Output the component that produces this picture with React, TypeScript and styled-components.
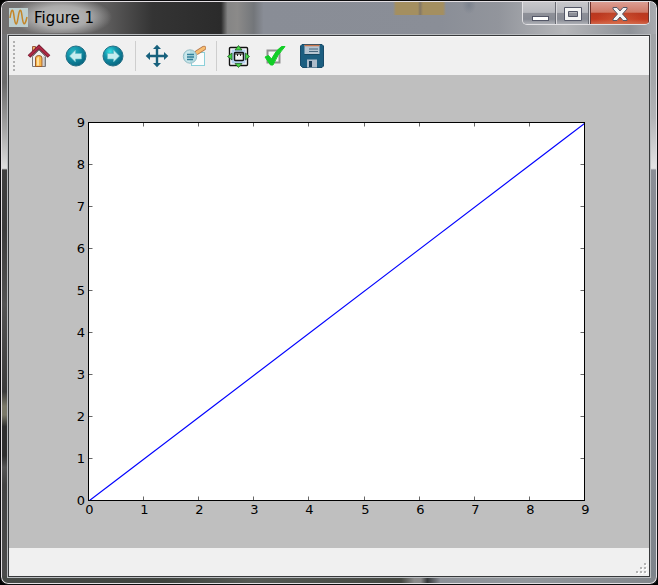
import React from "react";
import styled, { createGlobalStyle, css } from "styled-components";

const GlobalStyle = createGlobalStyle`
  * { box-sizing: border-box; }
  body { margin: 0; background: #000; font-family: "DejaVu Sans", Verdana, sans-serif; }
`;

const Frame = styled.div`
  display: flex;
  flex-direction: column;
  min-height: 100vh;
  padding: 1px 6px 6px;
  border: 1px solid #0c0c0e;
  border-radius: 8px;
  box-shadow: inset 0 0 0 1px #e4e0e4;
  background:
    linear-gradient(90deg, #484b48, #40443f 25%, #565a55 38%, #454842 60%, #454842 61%, #8b8b8b 63%, #8b8b8b 64%, #35383a 65%, #8d9198 67%, #92979c 80%, #82868b) bottom / 100% 8px no-repeat,
    linear-gradient(180deg, #77777b, #6a6a6a 14%, #a5a5a5 22%, #d8d8d8 28%, #dedede 28.7%, #404040 29%, #3b3b3b 39%, #535353 52%, #3b3b3b 67%, #7b7969 69.5%, #7b7969 71%, #2f2f2f 73%, #2f2f2f 78%, #555 80%, #424242 83%, #4d4d4d) left / 9px 100% no-repeat,
    linear-gradient(180deg, #9da0a3, #a6a8ab 14%, #b3b4b7 20%, #e3e3e4 28.7%, #8b8e96 29%, #83878f 60%, #7e848b) right / 9px 100% no-repeat,
    #4b4b4b;
`;

const TitleBar = styled.header`
  display: flex;
  align-items: flex-start;
  height: 32px;
  margin: 0 -5px;
  border-radius: 6px 6px 0 0;
  background:
    radial-gradient(ellipse 7px 9px at 467px 3px, #727a87aa 0, transparent 100%),
    linear-gradient(90deg, #716f6f, #737171 8%, #5d5c5c 16%, #343434 23%, #2b2b2b 33.5%, #858585 34.5%, #8b8a89 36%, #73767a 38.5%, #898d96 40%, #8a8e97 67%, #92959c 76%, #b5b6b9 86%, #8e9298 96%, #a9abaf);
`;

const TitleText = styled.h1`
  display: flex;
  align-items: center;
  flex: 1;
  gap: 6px;
  height: 31px;
  margin: 0;
  padding-left: 7px;
  font-size: 15px;
  font-weight: 400;
  color: #000;
  background:
    radial-gradient(ellipse 50px 20px at 60px 15px, #c8c8c8e6 0, #bababacc 55%, transparent 100%),
    linear-gradient(90deg, transparent, #a48f60 3px, #a48f60 25px, #817666 27px, #a48f60 30px, #a48f60 50px, transparent) 391px 0 / 53px 13px no-repeat;
`;

const WindowControls = styled.div`
  display: flex;
  height: 23px;
  margin-right: 6px;
  border: 1px solid #e3e2e5;
  border-top: 0;
  border-radius: 0 0 5px 5px;
  overflow: hidden;
`;

const ControlButton = styled.button<{ $kind: "minimise" | "maximise" | "close" }>`
  display: grid;
  place-items: center;
  width: 34px;
  height: 23px;
  padding: 0;
  border: 0;
  border-right: 1px solid #d9d8dc;
  box-shadow: inset 0 -1px #494b52, inset -1px 0 #696b73;
  background: linear-gradient(#c7c7cb 0, #b7b8bd 45%, #8e9098 50%, #888b94 75%, #b5b7bc);
  ${(p) => p.$kind === "maximise" && css`width: 33px;`}
  ${(p) => p.$kind === "close" && css`
    width: 59px;
    border-right: 0;
    box-shadow: inset 0 -1px #4a1d1b, inset 1px 0 #6e302a, inset -1px 0 #6e302a;
    background:
      radial-gradient(ellipse at 50% 100%, #dc785080, transparent 60%),
      linear-gradient(#dc9e93 0, #cf7a68 44%, #b93820 50%, #c3391f 75%, #d27154);
  `}
`;

const Client = styled.main`
  display: flex;
  flex-direction: column;
  flex: 1;
  border: 1px solid #37393b;
  outline: 1px solid #b9bcbf;
  margin: 1px;
  background: #f0f0f0;
`;

const Toolbar = styled.div`
  display: flex;
  align-items: center;
  height: 39px;
  padding-left: 4px;
  border-top: 1px solid #fafafa;
  background: #f0f0f0;
`;

const Handle = styled.div`
  width: 8px;
  height: 31px;
  background: radial-gradient(circle at 1px 1px, #b0b0b0 1px, transparent 1px) 0 0 / 8px 4px;
`;

const ToolButton = styled.button`
  display: grid;
  place-items: center;
  width: 37px;
  height: 36px;
  padding: 0 1px 1px 0;
  border: 0;
  background: none;
`;

const Separator = styled.div`
  width: 1px;
  height: 30px;
  margin: 0 3px;
  background: #cecece;
`;

const Canvas = styled.section`
  display: flex;
  flex: 1;
  background: #bfbfbf;
`;

const Chart = styled.svg`
  display: block;
  width: 100%;
  height: auto;
  font-family: "DejaVu Sans", sans-serif;
  font-size: 13px;
`;

const StatusBar = styled.footer`
  display: flex;
  align-items: flex-end;
  justify-content: flex-end;
  height: 28px;
  padding: 2px;
  background: #f0f0f0;
`;

const Icon = ({ children }: { children: React.ReactNode }) => (
  <svg width="24" height="24" viewBox="0 0 24 24" aria-hidden="true">{children}</svg>
);

const HomeIcon = () => (
  <Icon>
    <path d="M5.5 11V2.5H8.5V8" fill="#f3b467" stroke="#9a5740" />
    <path d="M5.5 12.5L12 6L18.5 12.5V22.5H5.5Z" fill="#ededed" stroke="#77777a" />
    <path d="M16.5 12L18 13V22H16.5Z" fill="#b2b2b5" />
    <path d="M8.5 22.5V14Q8.5 11.5 11.8 11.5T15 14V22.5Z" fill="#f7b74b" stroke="#9c5b2c" />
    <path d="M10 21.5V14.5Q10 13 12 13V21.5Z" fill="#ffe0a3" />
    <path d="M2 12.5L12 2.8L22 12.5" fill="none" stroke="#701f31" strokeWidth="3.8" />
    <path d="M2.2 12.1L12 2.8L21.8 12.1" fill="none" stroke="#b02845" strokeWidth="2" />
  </Icon>
);

const ArrowIcon = ({ forward = false }: { forward?: boolean }) => (
  <Icon>
    <defs>
      <radialGradient id={forward ? "fwd" : "back"} cx=".35" cy=".28" r=".75">
        <stop offset="0" stopColor={forward ? "#36e1e6" : "#28b3c1"} />
        <stop offset=".4" stopColor="#1396ab" />
        <stop offset="1" stopColor="#076580" />
      </radialGradient>
    </defs>
    <circle cx="12" cy="12" r="10" fill={`url(#${forward ? "fwd" : "back"})`} stroke="#267187" />
    <path
      d={forward ? "M18.5 12L12.5 6V9.5H6.5V15H12.5V18Z" : "M5.5 12L11.5 6V9.5H17.5V15H11.5V18Z"}
      fill="#c5edf0" stroke="#63b9c5" strokeWidth=".6"
    />
  </Icon>
);

const PanIcon = () => (
  <Icon>
    <path d="M12 3V21M3 12H21" stroke="#17617d" strokeWidth="2.4" />
    <path d="M12 .7L16 5H8ZM12 23.3L8 19H16ZM.7 12L5 8V16ZM23.3 12L19 8V16Z" fill="#17617d" />
  </Icon>
);

const ZoomIcon = () => (
  <Icon>
    <rect x="9.5" y="8.5" width="13" height="13" fill="#fafcfc" stroke="#8bd0da" />
    <path d="M15 8.5L22 4" stroke="#b5784e" strokeWidth="4.5" strokeLinecap="round" />
    <path d="M15 8.5L22 4" stroke="#f7bd70" strokeWidth="3" strokeLinecap="round" />
    <circle cx="8" cy="12.5" r="6.7" fill="#b2dbe1" stroke="#98bfc7" />
    <path d="M2.5 12A6 6 0 0 1 8 6.5V18.5A6 6 0 0 1 2.5 12Z" fill="#d6edf0" opacity=".7" />
    <path d="M5 10.5H12M5 13H12M5 15.5H11" stroke="#327f99" strokeWidth="1.4" />
  </Icon>
);

const SubplotsIcon = () => (
  <Icon>
    <rect x="3.5" y="3.5" width="18" height="18" rx="1" fill="#fff" stroke="#111" strokeWidth="1.4" />
    <rect x="5.5" y="5.5" width="14" height="14" fill="#b5d0ed" />
    <rect x="8.5" y="8.5" width="9" height="8" rx="1" fill="#f3f3f3" stroke="#111" strokeWidth="1.5" />
    <path d="M9 10H17M11.5 10V12M14.5 10V12" stroke="#222" />
    <path d="M12.5 1.5L16 6H9ZM12.5 23.5L9 19.5H16ZM1.5 12.5L6 9V16ZM23.5 12.5L19.5 9V16Z" fill="#46d645" stroke="#17501b" strokeWidth=".7" />
  </Icon>
);

const CheckIcon = () => (
  <Icon>
    <rect x="4.5" y="6.5" width="12" height="12" fill="#f7f7f7" stroke="#909090" strokeWidth="2" />
    <path d="M2 13L5.5 11.5L8.5 15Q13 6 18.5 2.5H22Q14 11 10 21H7.5Z" fill="#12ce27" stroke="#12ce27" />
  </Icon>
);

const SaveIcon = () => (
  <Icon>
    <path d="M2 .5H22L23.5 2V22L22 23.5H2.5L.5 21.5V2Z" fill="#1c5e80" stroke="#184b69" />
    <rect x="4.5" y="1" width="15" height="9" fill="#b5c4d1" />
    <path d="M4.5 1.5H19.5" stroke="#c8764c" strokeWidth="1.5" />
    <path d="M9 5H18M9 7.5H18" stroke="#45677f" />
    <path d="M4.5 10.5H19.5" stroke="#174761" />
    <rect x="7" y="15.5" width="10" height="8" fill="#aebcca" />
    <rect x="9" y="17" width="3" height="6" fill="#183c57" />
  </Icon>
);

const TitleIcon = () => (
  <svg width="19" height="19" viewBox="0 0 19 19" aria-hidden="true">
    <rect width="19" height="19" fill="#bdcfcf" />
    <path d="M1 10C2.5 0 4 0 5 8S7.5 20 9 10S12 0 13 8S15.500 20 18 9" fill="none" stroke="#c48629" strokeWidth="1.5" />
  </svg>
);

const LEFT = 79.5;
const RIGHT = 575.5;
const TOP = 47.5;
const BOTTOM = 425.5;
const ticks = Array.from({ length: 10 }, (_, value) => value);
const tickX = (value: number) => Math.round((value * (RIGHT - LEFT)) / 9) + LEFT;
const tickY = (value: number) => BOTTOM - (value * (BOTTOM - TOP)) / 9;

const LineChart = () => (
  <Chart viewBox="0 0 640 473" role="img" aria-label="Line plot from 0 to 9">
    <rect x={LEFT} y={TOP} width={RIGHT - LEFT} height={BOTTOM - TOP} fill="#fff" />
    <path d={`M${LEFT + 1} ${BOTTOM}L${RIGHT} ${TOP + 1}`} stroke="#00f" strokeWidth="1.1" />
    {ticks.map((value) => (
      <g key={value}>
        <path
          d={`M${tickX(value)} ${BOTTOM}v-4M${tickX(value)} ${TOP}v4M${LEFT} ${tickY(value)}h4M${RIGHT} ${tickY(value)}h-4`}
          stroke="#000" strokeWidth=".6"
        />
        <text x={tickX(value) + 1} y="439" textAnchor="middle">{value}</text>
        <text x="76" y={tickY(value) + 4} textAnchor="end">{value}</text>
      </g>
    ))}
    <rect x={LEFT} y={TOP} width={RIGHT - LEFT} height={BOTTOM - TOP} fill="none" stroke="#000" />
  </Chart>
);

const gripDots = [[8, 0], [4, 4], [8, 4], [0, 8], [4, 8], [8, 8]];

export default function App() {
  return (
    <>
      <GlobalStyle />
      <Frame>
        <TitleBar>
          <TitleText><TitleIcon />Figure 1</TitleText>
          <WindowControls>
            <ControlButton $kind="minimise" aria-label="Minimise">
              <svg width="18" height="18" viewBox="0 0 18 18">
                <rect x="1.5" y="11.5" width="16" height="4" fill="#fff" stroke="#535666" />
              </svg>
            </ControlButton>
            <ControlButton $kind="maximise" aria-label="Maximise">
              <svg width="18" height="16" viewBox="0 0 18 16">
                <path d="M.5 1.5H17.5V14.5H.5ZM4.5 5.5V10.5H13.5V5.5Z" fill="#f5f5f5" fillRule="evenodd" stroke="#535666" />
              </svg>
            </ControlButton>
            <ControlButton $kind="close" aria-label="Close">
              <svg width="16" height="16" viewBox="0 0 16 16">
                <path d="M1 1.5H5L8 5L11 1.5H15V3L10.5 8L15 13V14.5H11L8 11L5 14.5H1V13L5.5 8L1 3Z" fill="#f5f5f5" stroke="#535666" />
              </svg>
            </ControlButton>
          </WindowControls>
        </TitleBar>
        <Client>
          <Toolbar role="toolbar" aria-label="Figure tools">
            <Handle />
            <ToolButton aria-label="Home"><HomeIcon /></ToolButton>
            <ToolButton aria-label="Back"><ArrowIcon /></ToolButton>
            <ToolButton aria-label="Forward"><ArrowIcon forward /></ToolButton>
            <Separator />
            <ToolButton aria-label="Pan"><PanIcon /></ToolButton>
            <ToolButton aria-label="Zoom"><ZoomIcon /></ToolButton>
            <Separator />
            <ToolButton aria-label="Subplots"><SubplotsIcon /></ToolButton>
            <ToolButton aria-label="Customize"><CheckIcon /></ToolButton>
            <ToolButton aria-label="Save"><SaveIcon /></ToolButton>
          </Toolbar>
          <Canvas><LineChart /></Canvas>
          <StatusBar>
            <svg width="11" height="11" viewBox="0 0 11 11" aria-hidden="true">
              {gripDots.map(([x, y]) => (
                <g key={`${x}-${y}`}>
                  <rect x={x + 1} y={y + 1} width="2" height="2" fill="#fff" />
                  <rect x={x} y={y} width="2" height="2" fill="#b3b3b3" />
                </g>
              ))}
            </svg>
          </StatusBar>
        </Client>
      </Frame>
    </>
  );
}
